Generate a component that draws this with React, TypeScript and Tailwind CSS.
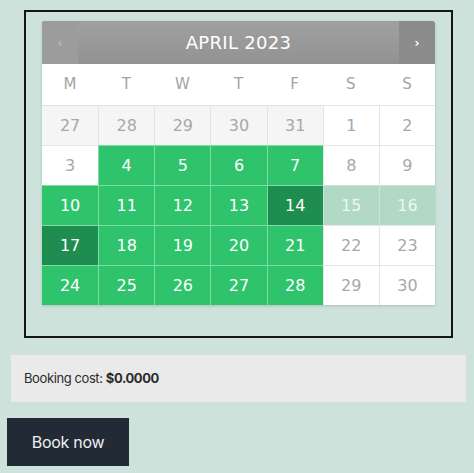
import { FC } from "react";

type Cell = { d: number; kind: "prev" | "plain" | "green" | "dark" | "light" };

const rows: Cell[][] = [
  [
    { d: 27, kind: "prev" },
    { d: 28, kind: "prev" },
    { d: 29, kind: "prev" },
    { d: 30, kind: "prev" },
    { d: 31, kind: "prev" },
    { d: 1, kind: "plain" },
    { d: 2, kind: "plain" },
  ],
  [
    { d: 3, kind: "plain" },
    { d: 4, kind: "green" },
    { d: 5, kind: "green" },
    { d: 6, kind: "green" },
    { d: 7, kind: "green" },
    { d: 8, kind: "plain" },
    { d: 9, kind: "plain" },
  ],
  [
    { d: 10, kind: "green" },
    { d: 11, kind: "green" },
    { d: 12, kind: "green" },
    { d: 13, kind: "green" },
    { d: 14, kind: "dark" },
    { d: 15, kind: "light" },
    { d: 16, kind: "light" },
  ],
  [
    { d: 17, kind: "dark" },
    { d: 18, kind: "green" },
    { d: 19, kind: "green" },
    { d: 20, kind: "green" },
    { d: 21, kind: "green" },
    { d: 22, kind: "plain" },
    { d: 23, kind: "plain" },
  ],
  [
    { d: 24, kind: "green" },
    { d: 25, kind: "green" },
    { d: 26, kind: "green" },
    { d: 27, kind: "green" },
    { d: 28, kind: "green" },
    { d: 29, kind: "plain" },
    { d: 30, kind: "plain" },
  ],
];

const cellClass: Record<Cell["kind"], string> = {
  prev: "bg-[#f5f5f5] text-[#a8a8a8] border-[#e3e3e3]",
  plain: "bg-white text-[#a8a8a8] border-[#e6e6e6]",
  green: "bg-[#2fc46c] text-white border-[#7fdca4]",
  dark: "bg-[#1f8d4f] text-white border-[#7fdca4]",
  light: "bg-[#b2d9c3] text-[#eef8f2] border-[#c9e6d6]",
};

const Calendar: FC = () => (
  <div className="w-[393px] rounded-t-[3px] shadow-[0_1px_3px_rgba(0,0,0,0.15)] font-['DejaVu_Sans',sans-serif]">
    <div className="flex h-[43px] rounded-t-[3px] bg-gradient-to-b from-[#a0a0a0] to-[#929292] text-white">
      <div className="flex w-[36px] items-center justify-center bg-[#9c9c9c] text-[12px] text-[#c4c4c4] rounded-tl-[3px]">
        ‹
      </div>
      <div className="flex flex-1 items-center justify-center text-[18px] tracking-[0.3px]">APRIL 2023</div>
      <div className="flex w-[36px] items-center justify-center bg-[#8c8c8c] text-[12px] font-bold rounded-tr-[3px]">
        ›
      </div>
    </div>
    <div className="grid h-[41px] grid-cols-7 bg-white text-[15px] text-[#a3a3a3]">
      {["M", "T", "W", "T", "F", "S", "S"].map((n, i) => (
        <div key={i} className="flex items-center justify-center">
          {n}
        </div>
      ))}
    </div>
    {rows.map((row, r) => (
      <div key={r} className="grid h-[40px] grid-cols-7">
        {row.map((c, i) => (
          <div
            key={i}
            className={`flex items-center justify-center border-t text-[16px] ${i > 0 ? "border-l" : ""} ${cellClass[c.kind]}`}
          >
            {c.d}
          </div>
        ))}
      </div>
    ))}
  </div>
);

export default function App() {
  return (
    <div className="min-h-[473px] bg-[#cce2da] pt-[10px] pl-[7px] pr-[8px] font-['Inter',sans-serif]">
      <div className="ml-[17px] h-[328px] w-[429px] border-2 border-[#151515] pl-[16px] pt-[9px]">
        <Calendar />
      </div>
      <div className="mt-[17px] ml-[4px] flex h-[47px] w-[455px] items-center bg-[#eaeaea] pl-[13px] text-[13px] tracking-[-0.4px] text-[#2b2b2b]">
        Booking cost:&nbsp;<span className="font-bold">$0.0000</span>
      </div>
      <button className="mt-[16px] h-[48px] w-[122px] bg-[#222a36] text-[16px] tracking-[-0.3px] text-[#eef0f3]">
        Book now
      </button>
    </div>
  );
}
